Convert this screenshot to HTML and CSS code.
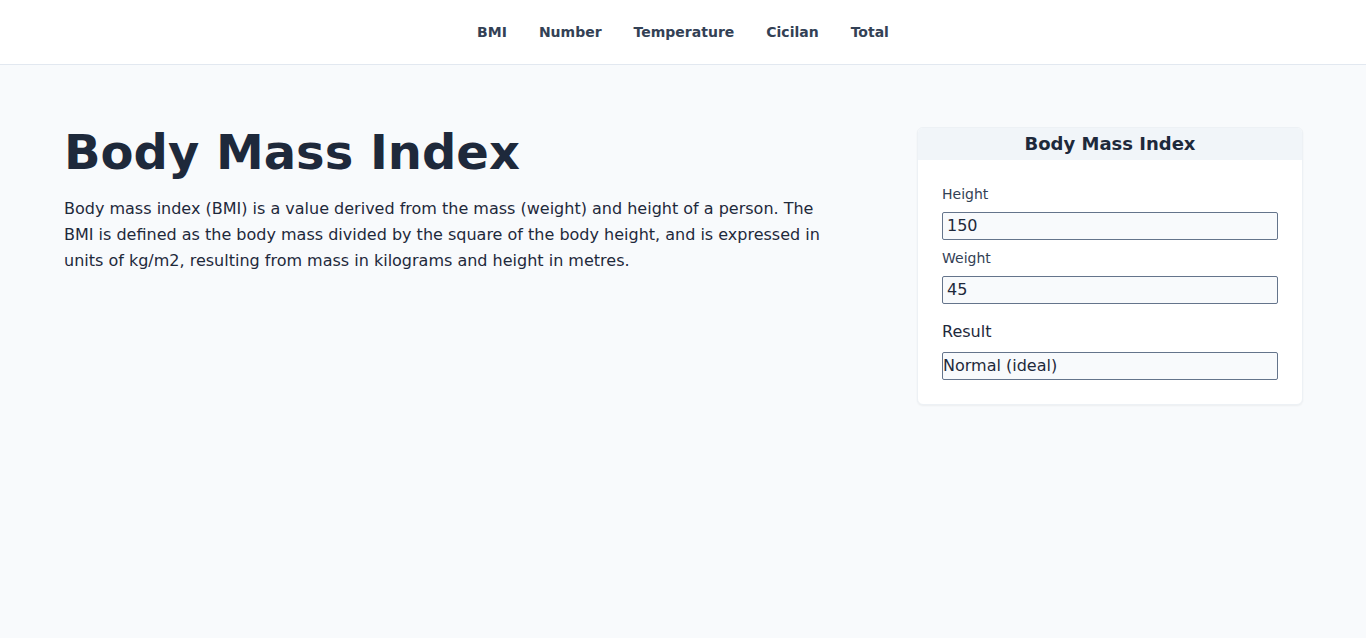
FILE: index.html
```html
<!DOCTYPE html>
<html lang="en">
<head>
<meta charset="UTF-8">
<meta name="viewport" content="width=device-width, initial-scale=1.0">
<title>Body Mass Index</title>
<link rel="stylesheet" href="styles.css">
</head>
<body>

<header class="topbar">
  <nav class="nav">
    <a href="#">BMI</a>
    <a href="#">Number</a>
    <a href="#">Temperature</a>
    <a href="#">Cicilan</a>
    <a href="#">Total</a>
  </nav>
</header>

<main class="page">
  <section class="intro">
    <h1>Body Mass Index</h1>
    <p>Body mass index (BMI) is a value derived from the mass (weight) and height of a person. The BMI is defined as the body mass divided by the square of the body height, and is expressed in units of kg/m2, resulting from mass in kilograms and height in metres.</p>
  </section>

  <aside class="card">
    <div class="card-head">Body Mass Index</div>
    <div class="card-body">
      <label for="height">Height</label>
      <input type="number" id="height" value="150">

      <label for="weight">Weight</label>
      <input type="number" id="weight" value="45">

      <div class="result-label">Result</div>
      <div class="result" id="result">Normal (ideal)</div>
    </div>
  </aside>
</main>

<script>
  function updateBmi() {
    let height = parseFloat(document.getElementById('height').value) / 100;
    let weight = parseFloat(document.getElementById('weight').value);
    let bmi = weight / (height * height);
    let text = 'Normal (ideal)';

    if (!bmi || !isFinite(bmi)) {
      text = '-';
    } else if (bmi < 18.5) {
      text = 'Underweight';
    } else if (bmi >= 25 && bmi < 30) {
      text = 'Overweight';
    } else if (bmi >= 30) {
      text = 'Obese';
    }

    document.getElementById('result').textContent = text;
  }

  document.getElementById('height').addEventListener('input', updateBmi);
  document.getElementById('weight').addEventListener('input', updateBmi);
</script>

</body>
</html>
```

FILE: styles.css
```css
body {
  margin: 0;
  font-family: 'DejaVu Sans', sans-serif;
  color: #1e293b;
  background-color: #f8fafc;
  min-height: 100vh;
}
.topbar {
  background-color: #fff;
  border-bottom: 1px solid #e2e8f0;
  height: 65px;
  box-sizing: border-box;
}
.nav {
  display: flex;
  justify-content: center;
  align-items: center;
  gap: 32px;
  height: 100%;
}
.nav a {
  color: #334155;
  font-size: 14px;
  font-weight: bold;
  text-decoration: none;
}
.page {
  display: flex;
  justify-content: space-between;
  align-items: flex-start;
  padding: 62px 64px;
}
.intro {
  width: 770px;
  padding-top: 1px;
}
h1 {
  margin: 0;
  font-size: 48px;
  line-height: 48px;
  font-weight: bold;
}
.intro p {
  margin: 20px 0 0;
  font-size: 16px;
  line-height: 26px;
}
.card {
  width: 386px;
  margin-right: -1px;
  box-sizing: border-box;
  background-color: #fff;
  border: 1px solid #edf1f5;
  border-radius: 6px;
  box-shadow: 0 1px 2px rgba(0, 0, 0, 0.05);
  overflow: hidden;
}
.card-head {
  background-color: #f1f5f9;
  height: 32px;
  box-sizing: border-box;
  padding-bottom: 2px;
  display: flex;
  align-items: center;
  justify-content: center;
  font-size: 18px;
  font-weight: bold;
}
.card-body {
  display: flex;
  flex-direction: column;
  padding: 24px;
}
label {
  font-size: 14px;
  line-height: 20px;
  color: #334155;
  margin-bottom: 8px;
}
input[type="number"] {
  height: 28px;
  box-sizing: border-box;
  padding: 0 4px 2px;
  margin: 0 0 8px;
  border: 1px solid #64748b;
  border-radius: 2px;
  background-color: #f8fafc;
  color: #1e293b;
  font-family: 'DejaVu Sans', sans-serif;
  font-size: 16px;
  -moz-appearance: textfield;
}
input[type="number"]::-webkit-inner-spin-button,
input[type="number"]::-webkit-outer-spin-button {
  -webkit-appearance: none;
  margin: 0;
}
.result-label {
  margin-top: 8px;
  font-size: 16px;
  line-height: 24px;
  margin-bottom: 8px;
}
.result {
  height: 28px;
  box-sizing: border-box;
  border: 1px solid #64748b;
  border-radius: 2px;
  background-color: #f8fafc;
  font-size: 16px;
  line-height: 24px;
  padding: 1px 0;
}
```
